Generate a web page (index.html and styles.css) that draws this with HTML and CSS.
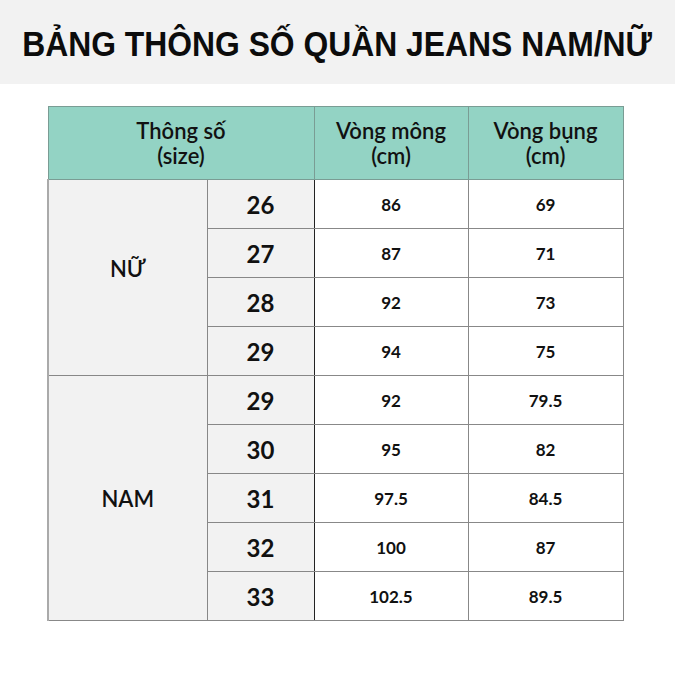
FILE: index.html
```html
<!DOCTYPE html>
<html lang="vi">
<head>
<meta charset="utf-8">
<link rel="stylesheet" href="styles.css">
</head>
<body>
<header class="banner"><h1 class="title">BẢNG THÔNG SỐ QUẦN JEANS NAM/NỮ</h1></header>
<main class="wrap">
<table class="chart">
<colgroup><col class="c1"><col class="c2"><col class="c3"><col class="c4"></colgroup>
<thead>
<tr><th colspan="2" class="h-first">Thông số<br>(size)</th><th class="h-mid">Vòng mông<br>(cm)</th><th>Vòng bụng<br>(cm)</th></tr>
</thead>
<tbody>
<tr><td rowspan="4" class="grp grp-nu">NỮ</td><td class="sz">26</td><td class="v">86</td><td class="v">69</td></tr>
<tr><td class="sz">27</td><td class="v">87</td><td class="v">71</td></tr>
<tr><td class="sz">28</td><td class="v">92</td><td class="v">73</td></tr>
<tr class="end"><td class="sz">29</td><td class="v">94</td><td class="v">75</td></tr>
<tr><td rowspan="5" class="grp">NAM</td><td class="sz">29</td><td class="v">92</td><td class="v">79.5</td></tr>
<tr><td class="sz">30</td><td class="v">95</td><td class="v">82</td></tr>
<tr><td class="sz">31</td><td class="v">97.5</td><td class="v">84.5</td></tr>
<tr><td class="sz">32</td><td class="v">100</td><td class="v">87</td></tr>
<tr><td class="sz">33</td><td class="v">102.5</td><td class="v">89.5</td></tr>
</tbody>
</table>
</main>
</body>
</html>
```
FILE: styles.css
```css
html, body { margin: 0; padding: 0; background: #ffffff; }
body { font-family: "Lato", "Liberation Sans", sans-serif; color: #111; width: 675px; height: 675px; overflow: hidden; }
.banner { background: #f2f2f2; height: 84px; display: flex; align-items: center; justify-content: center; overflow: hidden; }
.title { margin: 0; font-family: "Liberation Sans", sans-serif; font-weight: 700; font-size: 35px; white-space: nowrap; color: #0c0c0c; padding-top: 4px; transform: scaleX(0.91); }
.wrap { padding: 22px 0 0 47px; }
.chart { border-collapse: collapse; table-layout: fixed; width: 576px; }
.c1 { width: 159px; } .c2 { width: 107px; } .c3 { width: 154px; } .c4 { width: 155px; }
.chart th { background: #93d3c4; height: 72px; font-weight: 600; font-size: 22px; line-height: 25px; border: 1px solid #7a9c94; padding: 0; color: #111; }
.chart th.h-mid { border-left: 1px solid #222; }
.chart td { height: 48px; border: 1px solid #888; padding: 0; text-align: center; }
.grp { background: #f2f2f2; font-size: 22px; font-weight: 600; border-left: 2px solid #aaa !important; }
.chart td.grp-nu { vertical-align: top; padding-top: 75px; }
.sz { background: #f2f2f2; font-size: 24px; font-weight: 700; border-right: 1px solid #222 !important; }
.v { font-size: 17px; font-weight: 700; background: #fff; }
.chart td.v:last-child { border-left: 1px solid #aaa; }
```
